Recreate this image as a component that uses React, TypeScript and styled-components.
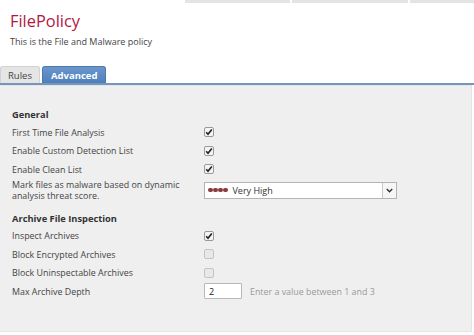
import React from "react";
import styled, { createGlobalStyle } from "styled-components";

const Global = createGlobalStyle`
  html, body { margin: 0; padding: 0; background: #fff; }
  body { font-family: "Open Sans", "Noto Sans", sans-serif; color: #333; }
`;

const Page = styled.div`
  width: 474px;
  height: 335px;
  overflow: hidden;
  background: #fff;
`;

const TopStrip = styled.div`
  margin-left: 185px;
  height: 3px;
  display: flex;
  gap: 2px;
`;

const StripPart = styled.div<{ $w: number }>`
  width: ${(p) => p.$w}px;
  background: #e4e4e4;
`;

const Header = styled.div`
  padding: 7px 10px 0;
  height: 56px;
`;

const Title = styled.h1`
  margin: 0;
  font-size: 16.4px;
  font-weight: 400;
  color: #b2163e;
  line-height: 22px;
`;

const Subtitle = styled.div`
  margin-top: 3px;
  font-size: 9px;
  color: #444;
`;

const Tabs = styled.div`
  display: flex;
  gap: 2px;
  height: 17px;
  align-items: flex-end;
  border-bottom: 2px solid #7895b8;
`;

const Tab = styled.div<{ $active?: boolean }>`
  height: 17px;
  box-sizing: border-box;
  padding: 0 ${(p) => (p.$active ? 8 : 7)}px;
  display: flex;
  align-items: center;
  font-size: 9.5px;
  font-weight: ${(p) => (p.$active ? 700 : 400)};
  color: ${(p) => (p.$active ? "#fff" : "#444")};
  background: ${(p) =>
    p.$active ? "linear-gradient(#6b96cc, #4f7fbb)" : "#e5e5e5"};
  border: 1px solid ${(p) => (p.$active ? "#4c78b0" : "#d2d2d2")};
  border-bottom: none;
  border-radius: 3px 3px 0 0;
`;

const Panel = styled.div`
  margin-right: 2px;
  height: 247px;
  box-sizing: border-box;
  background: #efefef;
  border-top: 1px solid #dfe6ee;
  border-right: 1px solid #e4e4e4;
  border-bottom: 1px solid #e4e4e4;
  padding: 20px 0 0 12px;
`;

const Section = styled.div`
  margin-bottom: 8px;
`;

const SectionTitle = styled.div`
  font-size: 9.3px;
  font-weight: 700;
  color: #333;
  height: 17px;
  line-height: 17px;
`;

const Row = styled.div<{ $h?: number }>`
  display: grid;
  grid-template-columns: 192px auto 1fr;
  align-items: center;
  min-height: ${(p) => p.$h ?? 18.5}px;
  font-size: 8.9px;
  color: #444;
`;

const Label = styled.div`
  line-height: 11.5px;
`;

const Box = styled.div<{ $checked?: boolean }>`
  width: 10px;
  height: 10px;
  box-sizing: border-box;
  border: 1px solid ${(p) => (p.$checked ? "#9a9a9a" : "#c4c4c4")};
  border-radius: 2px;
  background: ${(p) => (p.$checked ? "#f4f4f4" : "#e8e8e8")};
  display: flex;
  align-items: center;
  justify-content: center;
`;

const Select = styled.div`
  width: 193px;
  height: 17px;
  box-sizing: border-box;
  background: #fff;
  border: 1px solid #b4b4b4;
  display: flex;
  align-items: center;
`;

const Dots = styled.div`
  display: flex;
  gap: 0.5px;
  padding-left: 3px;
  margin-right: 5px;
`;

const Dot = styled.span`
  width: 4.5px;
  height: 4.5px;
  border-radius: 50%;
  background: #8a3a3e;
`;

const SelectText = styled.span`
  flex: 1;
  font-size: 9px;
  color: #333;
`;

const Arrow = styled.div`
  width: 13px;
  height: 100%;
  border-left: 1px solid #c8c8c8;
  background: #f6f6f6;
  display: flex;
  align-items: center;
  justify-content: center;
`;

const NumberBox = styled.div`
  width: 38px;
  height: 16px;
  box-sizing: border-box;
  background: #fff;
  border: 1px solid #b8b8b8;
  border-radius: 1px;
  padding-left: 4px;
  font-size: 9px;
  color: #222;
  display: flex;
  align-items: center;
`;

const Hint = styled.span`
  margin-left: 8px;
  font-size: 8.9px;
  color: #9a9a9a;
`;

const Tick = () => (
  <svg width="8" height="8" viewBox="0 0 8 8">
    <path d="M1.2 4.2 L3 6.2 L6.8 1.4" fill="none" stroke="#222" strokeWidth="1.6" />
  </svg>
);

const Check = ({ on }: { on?: boolean }) => <Box $checked={on}>{on && <Tick />}</Box>;

export default function App() {
  return (
    <Page>
      <Global />
      <TopStrip>
        <StripPart $w={106} />
        <StripPart $w={117} />
        <StripPart $w={64} />
      </TopStrip>
      <Header>
        <Title>FilePolicy</Title>
        <Subtitle>This is the File and Malware policy</Subtitle>
      </Header>
      <Tabs>
        <Tab>Rules</Tab>
        <Tab $active>Advanced</Tab>
      </Tabs>
      <Panel>
        <Section>
          <SectionTitle>General</SectionTitle>
          <Row>
            <Label>First Time File Analysis</Label>
            <Check on />
          </Row>
          <Row>
            <Label>Enable Custom Detection List</Label>
            <Check on />
          </Row>
          <Row>
            <Label>Enable Clean List</Label>
            <Check on />
          </Row>
          <Row>
            <Label>
              Mark files as malware based on dynamic
              <br />
              analysis threat score.
            </Label>
            <Select>
              <Dots>
                <Dot />
                <Dot />
                <Dot />
                <Dot />
              </Dots>
              <SelectText>Very High</SelectText>
              <Arrow>
                <svg width="7" height="5" viewBox="0 0 7 5">
                  <path d="M0.8 1 L3.5 3.8 L6.2 1" fill="none" stroke="#333" strokeWidth="1.4" />
                </svg>
              </Arrow>
            </Select>
          </Row>
        </Section>
        <Section>
          <SectionTitle>Archive File Inspection</SectionTitle>
          <Row>
            <Label>Inspect Archives</Label>
            <Check on />
          </Row>
          <Row>
            <Label>Block Encrypted Archives</Label>
            <Check />
          </Row>
          <Row>
            <Label>Block Uninspectable Archives</Label>
            <Check />
          </Row>
          <Row>
            <Label>Max Archive Depth</Label>
            <NumberBox>2</NumberBox>
            <Hint>Enter a value between 1 and 3</Hint>
          </Row>
        </Section>
      </Panel>
    </Page>
  );
}
